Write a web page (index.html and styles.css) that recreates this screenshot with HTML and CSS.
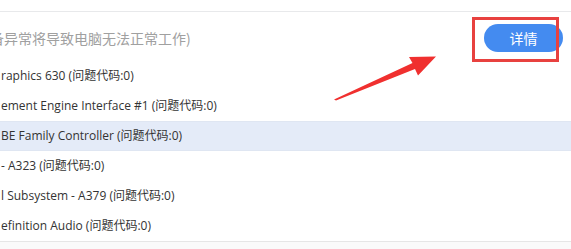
FILE: index.html
```html
<!DOCTYPE html>
<html lang="zh-CN">
<head>
<meta charset="utf-8">
<link rel="stylesheet" href="styles.css">
</head>
<body>
<div class="panel">
  <div class="header">
    <div class="title">备异常将导致电脑无法正常工作)</div>
    <button class="detail-btn">详情</button>
  </div>
  <ul class="devices">
    <li class="row">raphics 630 (问题代码:0)</li>
    <li class="row">ement Engine Interface #1 (问题代码:0)</li>
    <li class="row active">BE Family Controller (问题代码:0)</li>
    <li class="row">- A323 (问题代码:0)</li>
    <li class="row">l Subsystem - A379 (问题代码:0)</li>
    <li class="row">efinition Audio (问题代码:0)</li>
  </ul>
  <div class="footer"></div>
</div>
<div class="mark-box"></div>
<svg class="mark-arrow" width="571" height="249" viewBox="0 0 571 249">
  <polygon points="334,99.5 412.5,63 409,57 436,56.5 418,75.5 415,69 336,100.5" fill="#f0302f"/>
</svg>
</body>
</html>
```

FILE: styles.css
```css
html, body {
  margin: 0;
  padding: 0;
  background: #ffffff;
  overflow: hidden;
}
body {
  width: 571px;
  height: 249px;
  font-family: "Open Sans", "Noto Sans CJK SC", sans-serif;
  position: relative;
}
.panel {
  padding-top: 11px;
}
.header {
  border-top: 1px solid #e8e9eb;
  height: 49px;
  display: flex;
  align-items: center;
  justify-content: space-between;
  padding-right: 8px;
}
.title {
  margin-left: -10px;
  font-family: "Noto Sans CJK SC", sans-serif;
  font-size: 14px;
  color: #a0a0a0;
  margin-top: 2px;
}
.detail-btn {
  width: 79px;
  height: 28px;
  border: none;
  border-radius: 14px;
  background: #448bf0;
  color: #ffffff;
  font-family: "Noto Sans CJK SC", sans-serif;
  font-size: 14px;
  padding: 0;
  margin-top: 2px;
}
.devices {
  list-style: none;
  margin: 0;
  padding: 0;
}
.row {
  height: 30px;
  line-height: 30px;
  font-size: 12px;
  color: #333333;
  white-space: nowrap;
  padding-left: 1px;
  box-sizing: border-box;
}
.active {
  background: #e4ebf8;
  border-top: 1px solid #dfe6f2;
  border-bottom: 1px solid #dfe6f2;
  line-height: 28px;
}
.footer {
  border-top: 1px solid #e6e6e6;
  height: 8px;
  background: #fafafa;
}
.mark-box {
  position: absolute;
  left: 472px;
  top: 17px;
  width: 81px;
  height: 39px;
  border: 3px solid #e8413f;
}
.mark-arrow {
  position: absolute;
  left: 0;
  top: 0;
}
```
